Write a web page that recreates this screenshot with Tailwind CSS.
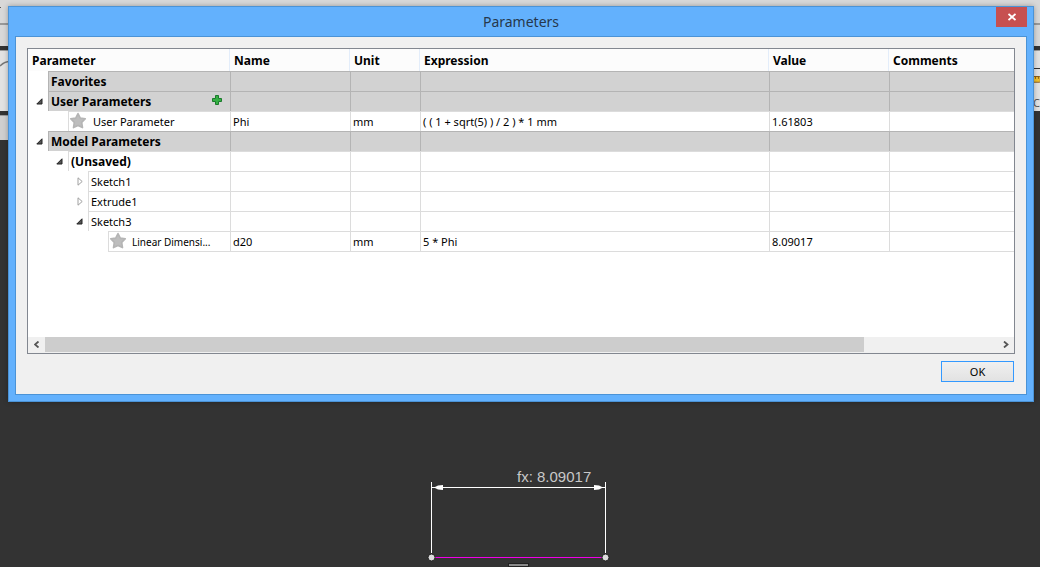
<!DOCTYPE html>
<html lang="en">
<head>
    <meta charset="UTF-8">
    <meta name="viewport" content="width=device-width, initial-scale=1.0">
    <title>Parameters</title>
    <script src="https://cdn.jsdelivr.net/npm/@tailwindcss/browser@4"></script>
</head>
<body class="bg-[#333333] font-['Noto_Sans','Open_Sans',sans-serif] text-xs text-black">
    <svg class="hidden">
        <symbol id="open" viewBox="0 0 7 7"><path d="M6 .8V6H.8Z" fill="#555" stroke="#222" /></symbol>
        <symbol id="closed" viewBox="0 0 7 9"><path d="M1 .8 5.2 4.5 1 8.2Z" fill="#fff" stroke="#a0a0a0" /></symbol>
        <symbol id="star" viewBox="0 0 18 18"><path d="M9 1.5 11.3 6.1 16.3 6.8 12.7 10.4 13.5 15.6 9 13.6 4.5 15.6 5.3 10.4 1.7 6.8 6.7 6.1Z" fill="#bdbdbd" stroke="#b5b5b5" stroke-width="1.6" stroke-linejoin="round" /></symbol>
    </svg>

    <main class="relative flex min-h-screen flex-col overflow-hidden">
        <!-- Application window behind the dialog -->
        <div class="h-[23px] bg-[#d8d8d8]">
            <svg class="h-[23px] w-3" viewBox="0 0 12 23"><path d="M0 7h1v1H0Z" fill="#555" /></svg>
        </div>
        <div class="h-[23px] border-t-2 border-[#999999] bg-[#d8d8d8]"></div>
        <div class="h-[5px] border-b border-[#999999] bg-[#333333]"></div>
        <div class="flex justify-between">
            <div class="w-1/2">
                <div class="h-[60px] bg-[#e2e2e2]">
                    <svg class="h-[60px] w-3" viewBox="0 0 12 60" fill="none"><path d="M0 15C3 12 6 10.500 10 10.500" stroke="#777" stroke-width="1.500" /></svg>
                </div>
                <div class="h-1 bg-[#333333]"></div>
                <div class="h-[25px] border-t border-[#999999] bg-[#cfcfcf]"></div>
            </div>
            <div class="flex h-[60px] w-1/2 flex-col items-end overflow-hidden bg-[#e2e2e2]">
                <div class="h-[19px] w-full border-b border-[#333333]"></div>
                <svg class="mt-[7px] h-[7px] w-2" viewBox="0 0 8 7"><path d="M0 0h8v7H0Z" fill="#8a5a14" /><path d="M0 1h8v5H0Z" fill="#f0c030" /><path d="M3.500 1v2M6.500 1v2" stroke="#8a5a14" /></svg>
                <span class="mt-3 text-[11px] leading-4 text-[#555555]">EC</span>
            </div>
        </div>

        <!-- Sketch canvas -->
        <div class="mt-auto flex justify-center pr-1">
            <svg class="h-[100px] w-[190px]" viewBox="0 0 190 100">
                <text x="94" y="15" fill="#c8c8c8" font-size="15" font-family="Liberation Sans, sans-serif">fx: 8.09017</text>
                <path d="M8.500 15V86M182.500 15V86M9 20.500H182" stroke="#fff" />
                <path d="M11 20.500 15 18.500 20 18v5L15 22.500ZM180 20.500 176 18.500 171 18v5L176 22.500Z" fill="#fff" />
                <path d="M8 90.500H182" stroke="#f000e8" />
                <circle cx="8.500" cy="90.500" r="3.500" fill="#dcdcdc" stroke="#222" />
                <circle cx="182.500" cy="90.500" r="3.500" fill="#dcdcdc" stroke="#222" />
                <path d="M85 96h21v4H85Z" fill="#222" /><path d="M86 97h19v2H86Z" fill="#8a8a8a" />
            </svg>
        </div>

        <!-- Parameters dialog -->
        <section role="dialog" aria-labelledby="title" class="absolute top-[6px] right-[6px] left-2 border border-[#4b93d6] bg-[#63b1fd] px-[6px] pb-[6px] shadow-[0_0_5px_rgba(0,0,0,0.3)]">
            <header class="relative flex h-[29px] items-center justify-center">
                <h1 id="title" class="text-sm text-[#26384c]">Parameters</h1>
                <button aria-label="Close" class="absolute top-0 right-0 flex h-5 w-[31px] items-center justify-center bg-[#c75050]">
                    <svg class="h-2 w-2" viewBox="0 0 8 8"><path d="M.5 1 7.500 7M7.500 1 .5 7" stroke="#fff" stroke-width="1.800" /></svg>
                </button>
            </header>

            <div class="border border-[#4b93d6] bg-[#f0f0f0] px-[11px] pt-[11px] pb-3">
                <div class="flex h-[306px] flex-col border border-[#828790] bg-white">
                    <table class="w-full table-fixed border-separate border-spacing-0 text-left">
                        <colgroup>
                            <col class="w-[202px]">
                            <col class="w-[120px]">
                            <col class="w-[70px]">
                            <col class="w-[349px]">
                            <col class="w-[120px]">
                            <col>
                        </colgroup>
                        <thead>
                            <tr class="h-[22px] bg-[#fcfcfc] text-xs leading-4 *:border-r *:border-[#e3edfa] *:p-0 *:pt-[2px] *:pl-1 *:font-bold *:last:border-r-0">
                                <th>Parameter</th>
                                <th>Name</th>
                                <th>Unit</th>
                                <th>Expression</th>
                                <th>Value</th>
                                <th>Comments</th>
                            </tr>
                        </thead>
                        <tbody class="text-[11px] leading-4">
                            <tr class="h-5 *:border-t *:border-l *:border-[#b4b4b4] *:bg-[#d2d2d2] *:p-0 *:pl-[2px] *:first:border-0 *:first:bg-white *:first:pl-5">
                                <td><div class="h-5 border-t border-l border-[#b4b4b4] bg-[#d2d2d2] pt-[2px] pl-[2px] text-xs leading-4 font-bold">Favorites</div></td>
                                <td></td><td></td><td></td><td></td><td></td>
                            </tr>
                            <tr class="h-5 *:border-t *:border-l *:border-[#b4b4b4] *:bg-[#d2d2d2] *:p-0 *:pl-[2px] *:first:border-0 *:first:bg-white *:first:pl-0">
                                <td>
                                    <div class="flex h-5">
                                        <button aria-label="Collapse User Parameters" class="flex w-5 items-center justify-end pr-[5px]"><svg class="h-[7px] w-[7px]"><use href="#open" /></svg></button>
                                        <div class="flex grow justify-between border-t border-l border-[#b4b4b4] bg-[#d2d2d2] pt-[2px] pr-2 pl-[2px] text-xs leading-4 font-bold">
                                            User Parameters
                                            <button aria-label="Add user parameter" class="h-[10px] w-[10px]">
                                                <svg class="mt-px h-[10px] w-[10px]" viewBox="0 0 10 10"><path d="M3.500.5h3v3h3v3h-3v3h-3v-3h-3v-3h3Z" fill="#35b044" stroke="#1b7a2c" /></svg>
                                            </button>
                                        </div>
                                    </div>
                                </td>
                                <td></td><td></td><td></td><td></td><td></td>
                            </tr>
                            <tr class="h-5 *:border-t *:border-l *:border-[#dcdcdc] *:p-0 *:pl-[2px] *:first:border-0 *:first:pl-10">
                                <td>
                                    <div class="flex h-5 border-t border-l border-[#dcdcdc]">
                                        <svg class="h-[18px] w-[18px]"><use href="#star" /></svg>
                                        <span class="pt-[2px] pl-[6px]">User Parameter</span>
                                    </div>
                                </td>
                                <td>Phi</td><td>mm</td><td>( ( 1 + sqrt(5) ) / 2 ) * 1 mm</td><td>1.61803</td><td></td>
                            </tr>
                            <tr class="h-5 *:border-t *:border-l *:border-[#b4b4b4] *:bg-[#d2d2d2] *:p-0 *:pl-[2px] *:first:border-0 *:first:bg-white *:first:pl-0">
                                <td>
                                    <div class="flex h-5">
                                        <button aria-label="Collapse Model Parameters" class="flex w-5 items-center justify-end pr-[5px]"><svg class="h-[7px] w-[7px]"><use href="#open" /></svg></button>
                                        <div class="grow border-t border-l border-[#b4b4b4] bg-[#d2d2d2] pt-[2px] pl-[2px] text-xs leading-4 font-bold">Model Parameters</div>
                                    </div>
                                </td>
                                <td></td><td></td><td></td><td></td><td></td>
                            </tr>
                            <tr class="h-5 *:border-t *:border-l *:border-[#dcdcdc] *:p-0 *:pl-[2px] *:first:border-0 *:first:pl-5">
                                <td>
                                    <div class="flex h-5">
                                        <button aria-label="Collapse Unsaved" class="flex w-5 items-center justify-end pr-[5px]"><svg class="h-[7px] w-[7px]"><use href="#open" /></svg></button>
                                        <div class="grow border-t border-l border-[#dcdcdc] pt-[2px] pl-[2px] text-xs leading-4 font-bold">(Unsaved)</div>
                                    </div>
                                </td>
                                <td></td><td></td><td></td><td></td><td></td>
                            </tr>
                            <tr class="h-5 *:border-t *:border-l *:border-[#dcdcdc] *:p-0 *:pl-[2px] *:first:border-0 *:first:pl-10">
                                <td>
                                    <div class="flex h-5">
                                        <button aria-label="Expand Sketch1" class="flex w-5 items-center justify-end pr-1"><svg class="h-[9px] w-[7px]"><use href="#closed" /></svg></button>
                                        <div class="grow border-t border-l border-[#dcdcdc] pt-[2px] pl-[2px]">Sketch1</div>
                                    </div>
                                </td>
                                <td></td><td></td><td></td><td></td><td></td>
                            </tr>
                            <tr class="h-5 *:border-t *:border-l *:border-[#dcdcdc] *:p-0 *:pl-[2px] *:first:border-0 *:first:pl-10">
                                <td>
                                    <div class="flex h-5">
                                        <button aria-label="Expand Extrude1" class="flex w-5 items-center justify-end pr-1"><svg class="h-[9px] w-[7px]"><use href="#closed" /></svg></button>
                                        <div class="grow border-t border-l border-[#dcdcdc] pt-[2px] pl-[2px]">Extrude1</div>
                                    </div>
                                </td>
                                <td></td><td></td><td></td><td></td><td></td>
                            </tr>
                            <tr class="h-5 *:border-t *:border-l *:border-[#dcdcdc] *:p-0 *:pl-[2px] *:first:border-0 *:first:pl-10">
                                <td>
                                    <div class="flex h-5">
                                        <button aria-label="Collapse Sketch3" class="flex w-5 items-center justify-end pr-[5px]"><svg class="h-[7px] w-[7px]"><use href="#open" /></svg></button>
                                        <div class="grow border-t border-l border-[#dcdcdc] pt-[2px] pl-[2px]">Sketch3</div>
                                    </div>
                                </td>
                                <td></td><td></td><td></td><td></td><td></td>
                            </tr>
                            <tr class="h-[21px] *:border-y *:border-l *:border-[#dcdcdc] *:p-0 *:pl-[2px] *:first:border-0 *:first:pl-20">
                                <td>
                                    <div class="flex h-[21px] border-y border-l border-[#dcdcdc]">
                                        <svg class="h-[18px] w-[18px]"><use href="#star" /></svg>
                                        <span class="pt-[2px] pl-[5px] text-[10px] leading-4">Linear Dimensi...</span>
                                    </div>
                                </td>
                                <td>d20</td><td>mm</td><td>5 * Phi</td><td>8.09017</td><td></td>
                            </tr>
                        </tbody>
                    </table>

                    <!-- Horizontal scrollbar -->
                    <div class="mt-auto flex h-4 bg-[#f0f0f0]">
                        <button aria-label="Scroll left" class="flex w-[17px] items-center justify-center pb-px">
                            <svg class="h-[7px] w-[6px]" viewBox="0 0 6 7" fill="none"><path d="M4.500 .5 1 3.500 4.500 6.500" stroke="#555" stroke-width="1.800" /></svg>
                        </button>
                        <div class="grow pb-px"><div class="h-full w-[86%] bg-[#cdcdcd]"></div></div>
                        <button aria-label="Scroll right" class="flex w-[17px] items-center justify-center pb-px">
                            <svg class="h-[7px] w-[6px]" viewBox="0 0 6 7" fill="none"><path d="M1 .5 4.500 3.500 1 6.500" stroke="#555" stroke-width="1.800" /></svg>
                        </button>
                    </div>
                </div>

                <div class="flex justify-end pt-[7px] pr-px">
                    <button class="h-[21px] w-[73px] border border-[#3399ff] bg-linear-to-b from-[#f0f0f0] to-[#e2e2e2] text-[11px] leading-4">OK</button>
                </div>
            </div>
        </section>
    </main>
</body>
</html>
